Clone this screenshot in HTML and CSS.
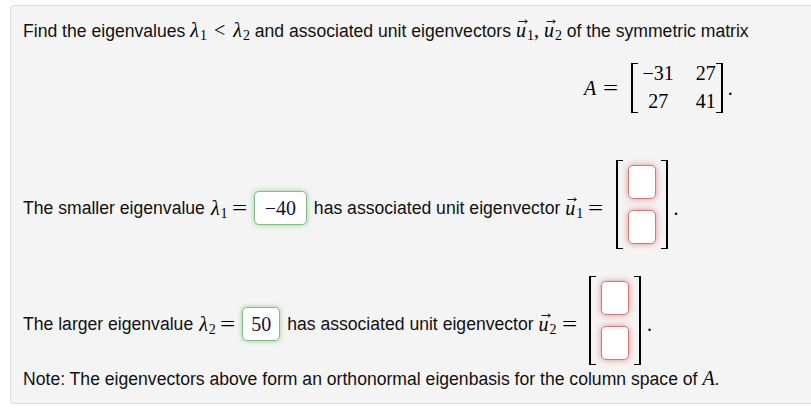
FILE: index.html
```html
<!DOCTYPE html>
<html>
<head>
<meta charset="utf-8">
<link rel="stylesheet" href="styles.css">
</head>
<body>
<div class="card">
  <p class="intro">Find the eigenvalues <span class="m"><i>λ</i><sub>1</sub><span class="rel lt">&lt;</span><i>λ</i><sub>2</sub></span> and associated unit eigenvectors <span class="m"><span class="vec"><svg class="arr" viewBox="0 0 10 5"><path d="M0.5 2.5H9.2M6.8 0.6L9.4 2.5L6.8 4.4" /></svg>u</span><sub>1</sub>, <span class="vec"><svg class="arr" viewBox="0 0 10 5"><path d="M0.5 2.5H9.2M6.8 0.6L9.4 2.5L6.8 4.4" /></svg>u</span><sub>2</sub></span> of the symmetric matrix</p>

  <div class="display">
    <span class="m lhs"><i>A</i><span class="rel">=</span></span>
    <span class="matrix">
      <span class="br l"></span>
      <span class="cells m">
        <span>−31</span><span>27</span>
        <span>27</span><span>41</span>
      </span>
      <span class="br r"></span>
    </span>
    <span class="m dot">.</span>
  </div>

  <div class="row r-small">
    <span>The smaller eigenvalue</span>
    <span class="m lam"><i>λ</i><sub>1</sub><span class="rel">=</span></span>
    <span class="ans ok w-neg"><span class="m val">−40</span></span>
    <span class="txt">has associated unit eigenvector</span>
    <span class="m uvec"><span class="vec"><svg class="arr" viewBox="0 0 10 5"><path d="M0.5 2.5H9.2M6.8 0.6L9.4 2.5L6.8 4.4" /></svg>u</span><sub>1</sub><span class="rel">=</span></span>
    <span class="vector">
      <span class="br l"></span>
      <span class="entries"><span class="ans bad"></span><span class="ans bad"></span></span>
      <span class="br r"></span>
    </span>
    <span class="m dot">.</span>
  </div>

  <div class="row r-large">
    <span>The larger eigenvalue</span>
    <span class="m lam"><i>λ</i><sub>2</sub><span class="rel">=</span></span>
    <span class="ans ok w-pos"><span class="m val">50</span></span>
    <span class="txt">has associated unit eigenvector</span>
    <span class="m uvec"><span class="vec"><svg class="arr" viewBox="0 0 10 5"><path d="M0.5 2.5H9.2M6.8 0.6L9.4 2.5L6.8 4.4" /></svg>u</span><sub>2</sub><span class="rel">=</span></span>
    <span class="vector">
      <span class="br l"></span>
      <span class="entries"><span class="ans bad"></span><span class="ans bad"></span></span>
      <span class="br r"></span>
    </span>
    <span class="m dot">.</span>
  </div>

  <p class="note">Note: The eigenvectors above form an orthonormal eigenbasis for the column space of <span class="m"><i>A</i></span>.</p>
</div>
</body>
</html>
```

FILE: styles.css
```css
html, body {
  margin: 0;
  overflow: hidden;
}

body {
  font-family: "Liberation Sans", Arial, sans-serif;
  font-size: 17.6px;
  line-height: 20px;
  color: #111;
  background: #fff;
}

.card {
  margin: 5px 0 0 10px;
  width: 812px;
  box-sizing: border-box;
  background: #f4f4f4;
  border: 1px solid #dcdcdc;
  border-radius: 4px;
  padding: 14px 12px 14px;
}

.intro,
.note {
  margin: 0;
  white-space: nowrap;
}

.m {
  font-family: "Liberation Serif", "Times New Roman", serif;
  font-size: 20px;
  color: #000;
}

.m i {
  font-style: italic;
}

.m sub {
  font-size: 14px;
  line-height: 0;
  vertical-align: -3px;
  margin-left: 1px;
}

.rel {
  display: inline-block;
  margin: 0 5px 0 6px;
  transform: scaleX(1.35);
}

.rel.lt {
  transform: none;
  margin: 0 8px 0 7px;
}

.vec {
  position: relative;
  display: inline-block;
  font-style: italic;
}

.arr {
  position: absolute;
  left: 2px;
  top: -1px;
  width: 10px;
  height: 5px;
}

.arr path {
  fill: none;
  stroke: #000;
  stroke-width: 0.9;
}

/* display matrix */
.display {
  display: flex;
  align-items: center;
  margin: 22px 0 0 561px;
}

.lhs .rel {
  margin: 0 5px 0 9px;
}

.matrix {
  display: flex;
  align-items: stretch;
  margin-left: 9px;
}

.br {
  width: 7px;
  box-sizing: border-box;
  border: 2px solid #000;
  border-top-width: 1.5px;
  border-bottom-width: 1.5px;
}

.br.l {
  border-right: 0;
}

.br.r {
  border-left: 0;
}

.cells {
  display: grid;
  grid-template-columns: auto auto;
  column-gap: 22px;
  row-gap: 8px;
  padding: 0 0 2px 5px;
  justify-items: center;
  line-height: 20px;
}

.dot {
  margin-left: 5px;
}

/* answer rows */
.row {
  display: flex;
  align-items: center;
  white-space: nowrap;
}

.r-small {
  margin-top: 47px;
}

.r-large {
  margin-top: 21px;
}

.lam {
  margin-left: 6px;
}

.lam .rel {
  margin: 0 6px 0 6px;
}

.ans {
  display: flex;
  align-items: center;
  justify-content: center;
  box-sizing: border-box;
  height: 34px;
  background: #fff;
  border-radius: 5px;
}

.ok {
  border: 1px solid #7fbf7f;
  box-shadow: 0 0 5px rgba(70, 160, 70, 0.5);
  margin-left: 3px;
}

.w-neg {
  width: 53px;
}

.w-pos {
  width: 38px;
}

.val {
  color: #101040;
}

.txt {
  margin-left: 7px;
}

.uvec {
  margin-left: 5px;
}

.uvec .rel {
  margin: 0 8px 0 7px;
}

.vector {
  display: flex;
  align-items: stretch;
  margin: 0 0 6px 6px;
}

.entries {
  display: flex;
  flex-direction: column;
  gap: 11px;
  padding: 5px;
}

.bad {
  width: 28px;
  border: 1px solid #d47777;
  box-shadow: 0 0 6px rgba(215, 60, 60, 0.55);
}

.vector + .dot {
  margin-left: 6px;
}

.note {
  margin-top: -3px;
}
```
